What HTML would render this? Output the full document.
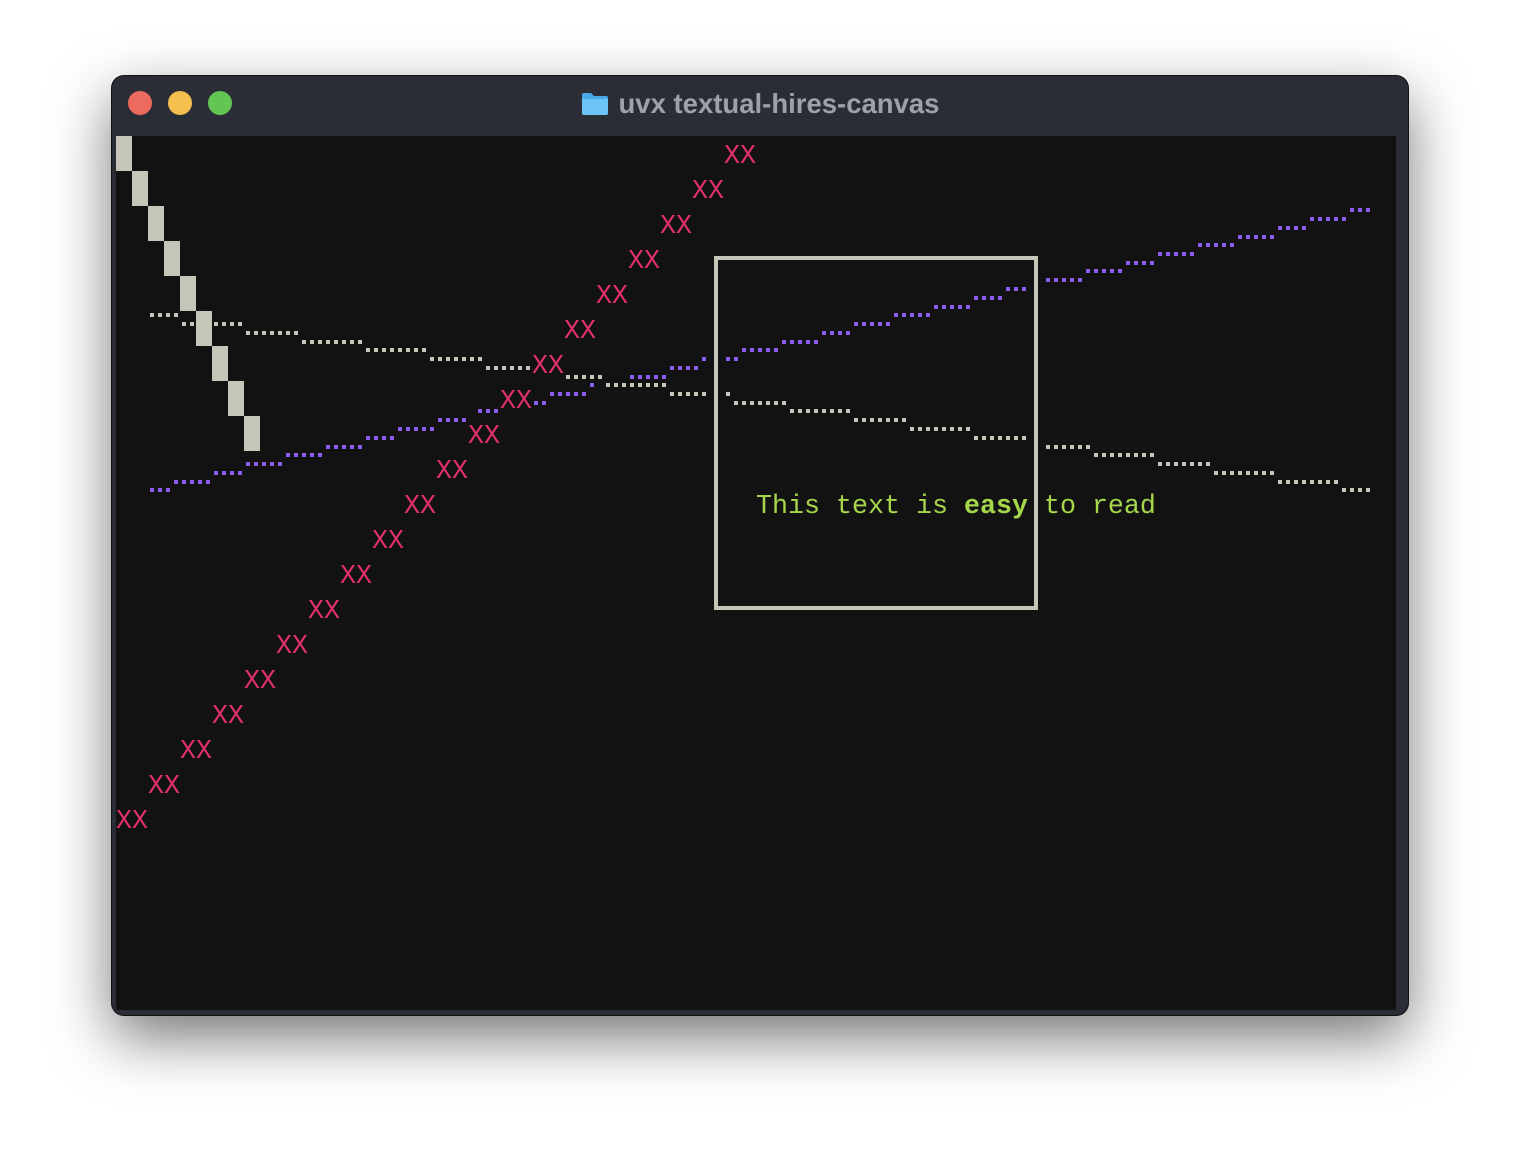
<!DOCTYPE html>
<html><head><meta charset="utf-8"><style>
html,body{margin:0;padding:0;background:#fff;width:1520px;height:1164px;overflow:hidden;position:relative}
.win{position:absolute;left:112px;top:76px;width:1296px;height:939px;border-radius:12px;background:#2a2d36;box-shadow:0 0 0 1px #111,0 22px 60px rgba(0,0,0,.55);overflow:hidden}
.dot{position:absolute;top:15px;width:24px;height:24px;border-radius:50%}
.title{position:absolute;left:0;right:0;top:0;height:56px;display:flex;align-items:center;justify-content:center;font:bold 27.5px "Liberation Sans",sans-serif;color:#9ea1a8}
.content{position:absolute;left:4px;top:60px;width:1280px;height:874px;background:#121212}
.t{position:absolute;font-family:"Liberation Mono",monospace;font-size:26.67px;line-height:35px;white-space:pre;padding-top:4px}
.xx{color:#e0306a}
</style></head><body>
<div class="win">
<div class="dot" style="left:16px;background:#ed6a5e"></div>
<div class="dot" style="left:56px;background:#f5bf4f"></div>
<div class="dot" style="left:96px;background:#62c554"></div>
<div class="title"><svg width="28" height="24" viewBox="0 0 28 24" style="margin-right:10px"><path d="M1 3q0-2 2-2h7l3 3h12q2 0 2 2v15q0 2-2 2H3q-2 0-2-2z" fill="#4aa8e8"/><path d="M1 7h26v14q0 2-2 2H3q-2 0-2-2z" fill="#6cc4f6"/></svg><span>uvx textual-hires-canvas</span></div>
<div class="content"></div>
</div>
<svg style="position:absolute;left:0;top:0" width="1520" height="1164">
<g fill="#c5c6b8">
<rect x="116" y="136" width="16" height="35"/><rect x="132" y="171" width="16" height="35"/><rect x="148" y="206" width="16" height="35"/><rect x="164" y="241" width="16" height="35"/><rect x="180" y="276" width="16" height="35"/><rect x="196" y="311" width="16" height="35"/><rect x="212" y="346" width="16" height="35"/><rect x="228" y="381" width="16" height="35"/><rect x="244" y="416" width="16" height="35"/>
</g>
<path fill="none" stroke="#c5c6b8" stroke-width="4" stroke-dasharray="4 4" d="M150 315h32M182 324h12M214 324h32M246 333h56M302 342h64M366 350h64M430 359h56M486 368h48M566 377h40M606 385h64M670 394h40M726 394h4M734 403h56M790 411h64M854 420h56M910 429h64M974 438h56M1046 447h48M1094 455h64M1158 464h56M1214 473h64M1278 482h64M1342 490h32"/>
<path fill="none" stroke="#8b5cf6" stroke-width="4" stroke-dasharray="4 4" d="M150 490h24M174 482h40M214 473h32M246 464h40M286 455h40M326 447h40M366 438h32M398 429h40M438 420h32M478 411h24M534 403h16M550 394h40M590 385h4M630 377h40M670 368h32M702 359h4M726 359h16M742 350h40M782 342h40M822 333h32M854 324h40M894 315h40M934 307h40M974 298h32M1006 289h24M1046 280h40M1086 271h40M1126 263h32M1158 254h40M1198 245h40M1238 237h40M1278 228h32M1310 219h40M1350 210h24"/>
<rect x="716" y="258" width="320" height="350" fill="none" stroke="#c5c6b8" stroke-width="4"/>
</svg>
<div class="t xx" style="left:724px;top:136px">XX</div>
<div class="t xx" style="left:692px;top:171px">XX</div>
<div class="t xx" style="left:660px;top:206px">XX</div>
<div class="t xx" style="left:628px;top:241px">XX</div>
<div class="t xx" style="left:596px;top:276px">XX</div>
<div class="t xx" style="left:564px;top:311px">XX</div>
<div class="t xx" style="left:532px;top:346px">XX</div>
<div class="t xx" style="left:500px;top:381px">XX</div>
<div class="t xx" style="left:468px;top:416px">XX</div>
<div class="t xx" style="left:436px;top:451px">XX</div>
<div class="t xx" style="left:404px;top:486px">XX</div>
<div class="t xx" style="left:372px;top:521px">XX</div>
<div class="t xx" style="left:340px;top:556px">XX</div>
<div class="t xx" style="left:308px;top:591px">XX</div>
<div class="t xx" style="left:276px;top:626px">XX</div>
<div class="t xx" style="left:244px;top:661px">XX</div>
<div class="t xx" style="left:212px;top:696px">XX</div>
<div class="t xx" style="left:180px;top:731px">XX</div>
<div class="t xx" style="left:148px;top:766px">XX</div>
<div class="t xx" style="left:116px;top:801px">XX</div>
<div class="t" style="left:756px;top:486px;color:#a6d64a">This text is <b>easy</b> to read</div>
</body></html>
